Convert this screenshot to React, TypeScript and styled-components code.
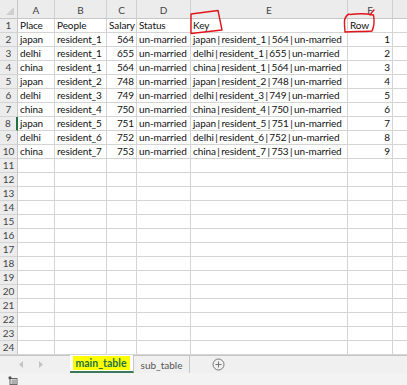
import React from "react";
import styled, { createGlobalStyle } from "styled-components";

const GlobalStyle = createGlobalStyle`
  html, body {
    margin: 0;
    padding: 0;
    background: #ffffff;
  }
  body {
    width: 407px;
    height: 385px;
    overflow: hidden;
    font-family: "Lato", "Liberation Sans", sans-serif;
  }
`;

const COLS = "18px 37px 52px 30px 54px 157px 45px 1fr";

const rows: string[][] = [
  ["japan", "resident_1", "564", "un-married", "japan|resident_1|564|un-married", "1"],
  ["delhi", "resident_1", "655", "un-married", "delhi|resident_1|655|un-married", "2"],
  ["china", "resident_1", "564", "un-married", "china|resident_1|564|un-married", "3"],
  ["japan", "resident_2", "748", "un-married", "japan|resident_2|748|un-married", "4"],
  ["delhi", "resident_3", "749", "un-married", "delhi|resident_3|749|un-married", "5"],
  ["china", "resident_4", "750", "un-married", "china|resident_4|750|un-married", "6"],
  ["japan", "resident_5", "751", "un-married", "japan|resident_5|751|un-married", "7"],
  ["delhi", "resident_6", "752", "un-married", "delhi|resident_6|752|un-married", "8"],
  ["china", "resident_7", "753", "un-married", "china|resident_7|753|un-married", "9"],
];

const Window = styled.div`
  position: relative;
  width: 407px;
  height: 385px;
  display: flex;
  flex-direction: column;
  overflow: hidden;
`;

const Sheet = styled.div`
  display: flex;
  flex-direction: column;
  flex: 0 0 auto;
`;

const HeaderRow = styled.div`
  display: grid;
  grid-template-columns: ${COLS};
  height: 19px;
  background: #ececec;
  border-bottom: 1px solid #c6c6c6;
  box-sizing: border-box;
`;

const ColHead = styled.div`
  display: flex;
  align-items: flex-end;
  justify-content: center;
  padding-bottom: 2px;
  font-size: 10px;
  color: #444;
  border-right: 1px solid #d0d0d0;
  box-sizing: border-box;
  &:last-child {
    border-right: none;
  }
`;

const Corner = styled.div`
  position: relative;
  border-right: 1px solid #c6c6c6;
  box-sizing: border-box;
`;

const Triangle = styled.div`
  position: absolute;
  right: 3px;
  bottom: 3px;
  width: 0;
  height: 0;
  border-left: 8px solid transparent;
  border-bottom: 8px solid #cfcfcf;
`;

const Row = styled.div`
  display: grid;
  grid-template-columns: ${COLS};
  height: 14px;
`;

const RowHead = styled.div<{ $active?: boolean }>`
  background: #ececec;
  color: #444;
  font-size: 10px;
  line-height: 13px;
  text-align: center;
  border-bottom: 1px solid #d4d4d4;
  border-right: ${(p) => (p.$active ? "2px solid #217346" : "1px solid #c6c6c6")};
  box-sizing: border-box;
`;

const Cell = styled.div<{ $num?: boolean }>`
  font-size: 10px;
  letter-spacing: -0.1px;
  line-height: 13px;
  color: #111;
  padding: 0 2px;
  white-space: nowrap;
  overflow: hidden;
  text-align: ${(p) => (p.$num ? "right" : "left")};
  border-right: 1px solid #d4d4d4;
  border-bottom: 1px solid #d4d4d4;
  box-sizing: border-box;
  &:last-child {
    border-right: none;
  }
`;

const Pipe = styled.span`
  padding: 0 1.5px;
`;

const TabBar = styled.div`
  height: 19px;
  display: flex;
  align-items: stretch;
  background: #f0f0f0;
  border-top: 1px solid #c6c6c6;
  box-sizing: border-box;
`;

const NavArrows = styled.div`
  width: 70px;
  display: flex;
  align-items: center;
  gap: 14px;
  padding-left: 19px;
  box-sizing: border-box;
`;

const Tab = styled.div<{ $active?: boolean }>`
  display: flex;
  align-items: center;
  justify-content: center;
  width: ${(p) => (p.$active ? "64px" : "56px")};
  margin-top: ${(p) => (p.$active ? "-1px" : "0")};
  background: ${(p) => (p.$active ? "#ffffff" : "transparent")};
  border-bottom: ${(p) => (p.$active ? "2px solid #3c7a5a" : "none")};
  border-right: 1px solid #c6c6c6;
  box-sizing: border-box;
  font-size: 10px;
  color: #555;
`;

const Highlight = styled.span`
  background: #ffff00;
  color: #217346;
  font-weight: 700;
  padding: 1px 3px 1px 2px;
  font-size: 10.5px;
`;

const AddTab = styled.div`
  display: flex;
  align-items: center;
  padding-left: 22px;
`;

const StatusBar = styled.div`
  flex: 1;
  background: #f3f3f3;
  display: flex;
  align-items: flex-start;
  padding: 3px 0 0 8px;
`;

const Overlay = styled.svg`
  position: absolute;
  left: 0;
  top: 0;
  pointer-events: none;
`;

function renderKey(text: string) {
  const parts = text.split("|");
  return parts.map((p, i) => (
    <React.Fragment key={i}>
      {p}
      {i < parts.length - 1 && <Pipe>|</Pipe>}
    </React.Fragment>
  ));
}

export default function App() {
  const letters = ["A", "B", "C", "D", "E", "F", ""];
  const headers = ["Place", "People", "Salary", "Status", "Key", "Row"];
  const total = 24;

  return (
    <>
      <GlobalStyle />
      <Window>
        <Sheet>
          <HeaderRow>
            <Corner>
              <Triangle />
            </Corner>
            {letters.map((l, i) => (
              <ColHead key={i}>{l}</ColHead>
            ))}
          </HeaderRow>
          {Array.from({ length: total }).map((_, r) => {
            const num = r + 1;
            let cells: string[] = ["", "", "", "", "", ""];
            if (num === 1) cells = headers;
            else if (num <= 10) cells = rows[num - 2];
            return (
              <Row key={num}>
                <RowHead $active={num === 8}>{num}</RowHead>
                {cells.map((c, i) => (
                  <Cell key={i} $num={num > 1 && (i === 2 || i === 5)}>
                    {i === 4 ? renderKey(c) : c}
                  </Cell>
                ))}
                <Cell />
              </Row>
            );
          })}
        </Sheet>
        <TabBar>
          <NavArrows>
            <svg width="5" height="7" viewBox="0 0 5 7">
              <path d="M4 0 L0 3.5 L4 7 Z" fill="#c4c4c4" />
            </svg>
            <svg width="5" height="7" viewBox="0 0 5 7">
              <path d="M1 0 L5 3.5 L1 7 Z" fill="#c4c4c4" />
            </svg>
          </NavArrows>
          <Tab $active>
            <Highlight>main_table</Highlight>
          </Tab>
          <Tab>sub_table</Tab>
          <AddTab>
            <svg width="13" height="13" viewBox="0 0 13 13">
              <circle cx="6.5" cy="6.5" r="5.5" fill="none" stroke="#777" strokeWidth="1" />
              <path d="M6.5 3.5 V9.5 M3.5 6.5 H9.5" stroke="#777" strokeWidth="1" />
            </svg>
          </AddTab>
        </TabBar>
        <StatusBar>
          <svg width="10" height="9" viewBox="0 0 10 9">
            <rect x="2" y="2.5" width="7" height="6" fill="none" stroke="#666" strokeWidth="1" />
            <path d="M3 5 H8 M3 7 H8 M5 3 V8.5 M7 3 V8.5" stroke="#888" strokeWidth="0.8" />
            <circle cx="2" cy="1.8" r="1.6" fill="#555" />
          </svg>
        </StatusBar>
        <Overlay width="407" height="385" viewBox="0 0 407 385">
          <path
            d="M191 14 L218 10.5 L222 30 L191 33.5 Z"
            fill="none"
            stroke="#e0141b"
            strokeWidth="1.4"
            strokeLinejoin="round"
          />
          <path
            d="M349 14 C345 16 344 20 344.5 25 L345 32 C354 31.5 364 31.5 372 31 C374 27 374.5 21 373.5 15 C366 13.5 358 13.5 350 14.5 M370 15 C371 13 372.5 11.5 374 10"
            fill="none"
            stroke="#e0141b"
            strokeWidth="1.4"
            strokeLinecap="round"
          />
        </Overlay>
      </Window>
    </>
  );
}
